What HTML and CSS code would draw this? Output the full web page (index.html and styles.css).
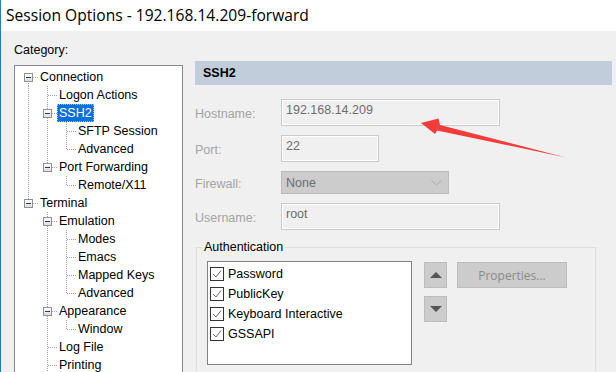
FILE: index.html
```html
<!DOCTYPE html>
<html>
<head>
<meta charset="utf-8">
<link rel="stylesheet" href="styles.css">
</head>
<body>
<div class="window">
  <div class="titlebar">Session Options - 192.168.14.209-forward</div>
  <div class="content">
    <div class="left">
      <div class="category">Category:</div>
      <div class="tree">
        <div class="row"><span class="c first"><span class="box"></span></span><span class="t">Connection</span></div>
        <div class="row"><span class="g on"></span><span class="c mid"></span><span class="t">Logon Actions</span></div>
        <div class="row"><span class="g on"></span><span class="c mid"><span class="box"></span></span><span class="t sel">SSH2</span></div>
        <div class="row"><span class="g on"></span><span class="g on"></span><span class="c mid"></span><span class="t">SFTP Session</span></div>
        <div class="row"><span class="g on"></span><span class="g on"></span><span class="c last"></span><span class="t">Advanced</span></div>
        <div class="row"><span class="g on"></span><span class="c last"><span class="box"></span></span><span class="t">Port Forwarding</span></div>
        <div class="row"><span class="g on"></span><span class="g"></span><span class="c last"></span><span class="t">Remote/X11</span></div>
        <div class="row"><span class="c last"><span class="box"></span></span><span class="t">Terminal</span></div>
        <div class="row"><span class="g"></span><span class="c mid"><span class="box"></span></span><span class="t">Emulation</span></div>
        <div class="row"><span class="g"></span><span class="g on"></span><span class="c mid"></span><span class="t">Modes</span></div>
        <div class="row"><span class="g"></span><span class="g on"></span><span class="c mid"></span><span class="t">Emacs</span></div>
        <div class="row"><span class="g"></span><span class="g on"></span><span class="c mid"></span><span class="t">Mapped Keys</span></div>
        <div class="row"><span class="g"></span><span class="g on"></span><span class="c last"></span><span class="t">Advanced</span></div>
        <div class="row"><span class="g"></span><span class="c mid"><span class="box"></span></span><span class="t">Appearance</span></div>
        <div class="row"><span class="g"></span><span class="g on"></span><span class="c last"></span><span class="t">Window</span></div>
        <div class="row"><span class="g"></span><span class="c mid"></span><span class="t">Log File</span></div>
        <div class="row"><span class="g"></span><span class="c mid"></span><span class="t">Printing</span></div>
      </div>
    </div>
    <div class="right">
      <div class="header">SSH2</div>
      <div class="form">
        <div class="field"><span class="label">Hostname:</span><div class="input wide">192.168.14.209</div></div>
        <div class="field"><span class="label">Port:</span><div class="input port">22</div></div>
        <div class="field"><span class="label">Firewall:</span><div class="select"><span>None</span><svg class="chev" width="11" height="6" viewBox="0 0 11 6"><polyline points="0.5,0.5 5.5,5 10.5,0.5" fill="none" stroke="#a9a9a9" stroke-width="1"/></svg></div></div>
        <div class="field"><span class="label">Username:</span><div class="input wide">root</div></div>
      </div>
      <fieldset class="group">
        <legend>Authentication</legend>
        <div class="auth-row">
          <div class="listbox">
            <div class="item"><span class="cb"><svg width="12" height="12" viewBox="0 0 12 12"><polyline points="2,6 5,9 10,2.5" fill="none" stroke="#6a6a6a" stroke-width="1"/></svg></span><span>Password</span></div>
            <div class="item"><span class="cb"><svg width="12" height="12" viewBox="0 0 12 12"><polyline points="2,6 5,9 10,2.5" fill="none" stroke="#6a6a6a" stroke-width="1"/></svg></span><span>PublicKey</span></div>
            <div class="item"><span class="cb"><svg width="12" height="12" viewBox="0 0 12 12"><polyline points="2,6 5,9 10,2.5" fill="none" stroke="#6a6a6a" stroke-width="1"/></svg></span><span>Keyboard Interactive</span></div>
            <div class="item"><span class="cb"><svg width="12" height="12" viewBox="0 0 12 12"><polyline points="2,6 5,9 10,2.5" fill="none" stroke="#6a6a6a" stroke-width="1"/></svg></span><span>GSSAPI</span></div>
          </div>
          <div class="arrows">
            <div class="abtn"><span class="tri-up"></span></div>
            <div class="abtn"><span class="tri-down"></span></div>
          </div>
          <div class="props">Properties...</div>
        </div>
      </fieldset>
    </div>
  </div>
  <svg class="annot" width="616" height="372" viewBox="0 0 616 372">
    <polygon points="421,123 438.5,118.5 440,125 566,157.5 437,130.5 435,134" fill="#f23b3b"/>
  </svg>
</div>
</body>
</html>
```
FILE: styles.css
```css
body {
  margin: 0;
  font-family: "Liberation Sans", Arial, sans-serif;
  font-size: 12.5px;
  color: #000;
}
.window {
  position: relative;
  width: 616px;
  height: 372px;
  overflow: hidden;
  box-sizing: border-box;
  border-left: 1px solid #2b78d0;
  background: #f0f0f0;
  display: flex;
  flex-direction: column;
}
.titlebar {
  flex: none;
  height: 31px;
  background: #fff;
  padding-left: 5px;
  font-family: "Open Sans", "Noto Sans", sans-serif;
  font-size: 15.6px;
  line-height: 31px;
  color: #000;
}
.content {
  flex: 1;
  min-height: 0;
  display: flex;
}
.left {
  flex: none;
  width: 182px;
  box-sizing: border-box;
  padding: 12px 0 0 13px;
}
.category {
  height: 15px;
  line-height: 15px;
  margin-bottom: 7px;
}
.tree {
  width: 169px;
  height: 420px;
  box-sizing: border-box;
  border: 1px solid #828790;
  background: #fff;
  padding-top: 2px;
}
.row {
  display: flex;
  height: 18px;
}
.g, .c {
  flex: none;
  height: 18px;
  background-repeat: no-repeat;
}
.g { width: 19px; }
.c { width: 23px; }
.g.on {
  background-image: repeating-linear-gradient(to bottom, #a0a0a0 0 1px, transparent 1px 2px);
  background-position: 13px 0;
  background-size: 1px 18px;
}
.c {
  background-image:
    repeating-linear-gradient(to bottom, #a0a0a0 0 1px, transparent 1px 2px),
    repeating-linear-gradient(to right, #a0a0a0 0 1px, transparent 1px 2px);
  background-position: 13px 0, 14px 9px;
  background-size: 1px 18px, 9px 1px;
}
.c.first {
  background-position: 13px 9px, 14px 9px;
  background-size: 1px 9px, 9px 1px;
}
.c.last {
  background-size: 1px 9px, 9px 1px;
}
.box {
  display: block;
  width: 9px;
  height: 9px;
  box-sizing: border-box;
  margin: 5px 0 0 9px;
  border: 1px solid #919191;
  background:
    linear-gradient(#2a3a5a, #2a3a5a) center / 5px 1px no-repeat,
    linear-gradient(#ffffff, #dcdcdc);
}
.t {
  padding: 0 2px;
  line-height: 18px;
  white-space: nowrap;
}
.t.sel {
  background: #0a70d8;
  color: #fff;
  outline: 1px dotted #f2b457;
  outline-offset: -1px;
}
.right {
  flex: none;
  width: 417px;
  margin-left: 12px;
  padding-top: 30px;
}
.header {
  height: 24px;
  line-height: 24px;
  background: #c1cdda;
  font-weight: bold;
  padding-left: 8px;
}
.form {
  margin-top: 14px;
  display: flex;
  flex-direction: column;
  gap: 9px;
}
.field {
  display: flex;
  align-items: center;
}
.label {
  flex: none;
  width: 86px;
  color: #a3a3a3;
  margin-top: 2px;
}
.input {
  height: 27px;
  box-sizing: border-box;
  border: 1px solid #cacaca;
  box-shadow: inset 0 0 0 1px #fff;
  padding: 3px 4px;
  line-height: 15px;
  color: #6d6d6d;
}
.input.wide { width: 219px; }
.input.port { width: 98px; }
.select {
  width: 168px;
  height: 23px;
  box-sizing: border-box;
  border: 1px solid #bcbcbc;
  background: #cccccc;
  color: #6d6d6d;
  display: flex;
  align-items: center;
  justify-content: space-between;
  padding: 0 6px 0 4px;
}
.chev { display: block; }
.group {
  margin: 10px 0 0 1px;
  width: 400px;
  box-sizing: border-box;
  border: 1px solid #dcdcdc;
  padding: 6px 0 20px 10px;
  min-width: 0;
}
.group legend {
  padding: 0 2px;
  margin-left: -5px;
  line-height: 15px;
}
.auth-row {
  display: flex;
  align-items: flex-start;
}
.listbox {
  flex: none;
  width: 205px;
  height: 104px;
  box-sizing: border-box;
  border: 1px solid #828282;
  background: #fff;
  padding: 2px 0 0 2px;
}
.item {
  height: 20px;
  display: flex;
  align-items: center;
  gap: 4px;
  white-space: nowrap;
}
.cb {
  flex: none;
  width: 14px;
  height: 14px;
  box-sizing: border-box;
  border: 1px solid #333;
  background: #fff;
  display: flex;
  align-items: center;
  justify-content: center;
}
.cb svg { display: block; }
.arrows {
  margin: 1px 0 0 12px;
  display: flex;
  flex-direction: column;
  gap: 8px;
}
.abtn {
  width: 23px;
  height: 26px;
  box-sizing: border-box;
  background: #cccccc;
  border: 1px solid #bdbdbd;
  display: flex;
  align-items: center;
  justify-content: center;
}
.tri-up {
  width: 0;
  height: 0;
  border-left: 6px solid transparent;
  border-right: 6px solid transparent;
  border-bottom: 6px solid #555;
}
.tri-down {
  width: 0;
  height: 0;
  border-left: 6px solid transparent;
  border-right: 6px solid transparent;
  border-top: 6px solid #555;
}
.props {
  margin: 1px 0 0 10px;
  width: 110px;
  height: 26px;
  box-sizing: border-box;
  background: #cccccc;
  border: 1px solid #bdbdbd;
  color: #8a8a8a;
  font-family: "Open Sans", "Noto Sans", sans-serif;
  font-size: 12px;
  display: flex;
  align-items: center;
  justify-content: center;
}
.annot {
  position: absolute;
  left: -1px;
  top: 0;
  pointer-events: none;
}
```
